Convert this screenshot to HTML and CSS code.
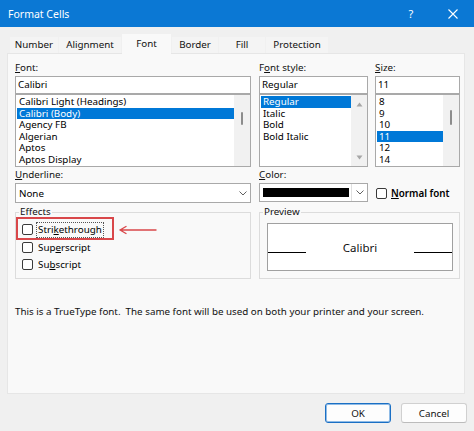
FILE: index.html
```html
<!DOCTYPE html>
<html>
<head>
<meta charset="utf-8">
<link rel="stylesheet" href="styles.css">
</head>
<body>
<div class="dialog">
  <div class="titlebar">
    <span class="title">Format Cells</span>
    <span class="help">?</span>
    <span class="close"><svg width="10" height="10" viewBox="0 0 10 10"><path d="M0.5 0.5L9.5 9.5M9.5 0.5L0.5 9.5" stroke="#fff" stroke-width="1.1" fill="none"/></svg></span>
  </div>
  <div class="tabs">
    <div class="tab t-number">Number</div>
    <div class="tab t-align">Alignment</div>
    <div class="tab t-font active">Font</div>
    <div class="tab t-border">Border</div>
    <div class="tab t-fill">Fill</div>
    <div class="tab t-prot">Protection</div>
  </div>
  <div class="panel">
    <div class="row row1">
      <div class="col c-font">
        <div class="label"><u>F</u>ont:</div>
        <div class="input">Calibri</div>
        <div class="list">
          <div class="items">
            <div class="item">Calibri Light (Headings)</div>
            <div class="item sel">Calibri (Body)</div>
            <div class="item">Agency FB</div>
            <div class="item">Algerian</div>
            <div class="item">Aptos</div>
            <div class="item">Aptos Display</div>
          </div>
          <div class="sb"><div class="thumb th-font"></div></div>
        </div>
      </div>
      <div class="col c-style">
        <div class="label">F<u>o</u>nt style:</div>
        <div class="input">Regular</div>
        <div class="list">
          <div class="items">
            <div class="item sel">Regular</div>
            <div class="item">Italic</div>
            <div class="item">Bold</div>
            <div class="item">Bold Italic</div>
          </div>
          <div class="sb sb-arrows">
            <svg width="7" height="5" viewBox="0 0 7 5"><path d="M3.5 0.5L6.5 4.5H0.5Z" fill="#a6a6a6"/></svg>
            <svg width="7" height="5" viewBox="0 0 7 5"><path d="M3.5 4.5L6.5 0.5H0.5Z" fill="#a6a6a6"/></svg>
          </div>
        </div>
      </div>
      <div class="col c-size">
        <div class="label"><u>S</u>ize:</div>
        <div class="input">11</div>
        <div class="list">
          <div class="items">
            <div class="item">8</div>
            <div class="item">9</div>
            <div class="item">10</div>
            <div class="item sel">11</div>
            <div class="item">12</div>
            <div class="item">14</div>
          </div>
          <div class="sb"><div class="thumb th-size"></div></div>
        </div>
      </div>
    </div>

    <div class="row row2">
      <div class="col c-font">
        <div class="label"><u>U</u>nderline:</div>
        <div class="select">
          <span class="sel-text">None</span>
          <span class="chev"><svg width="8" height="5" viewBox="0 0 8 5"><path d="M0.5 0.5L4 4L7.5 0.5" stroke="#606060" stroke-width="1" fill="none"/></svg></span>
        </div>
      </div>
      <div class="col c-style">
        <div class="label"><u>C</u>olor:</div>
        <div class="select color-select">
          <span class="swatch"></span>
          <span class="chev chev-div"><svg width="8" height="5" viewBox="0 0 8 5"><path d="M0.5 0.5L4 4L7.5 0.5" stroke="#606060" stroke-width="1" fill="none"/></svg></span>
        </div>
      </div>
      <div class="col c-size">
        <div class="label">&nbsp;</div>
        <div class="check-line">
          <span class="cb"></span><span class="cb-text"><u>N</u>ormal font</span>
        </div>
      </div>
    </div>

    <div class="row row3">
      <fieldset class="group g-effects">
        <legend>Effects</legend>
        <div class="check-row first">
          <span class="cb"></span><span class="cb-text focus">Stri<u>k</u>ethrough</span>
          <span class="red-box"></span>
          <svg class="red-arrow" width="38" height="10" viewBox="0 0 38 10"><path d="M1 5H37M1 5L7 1.5M1 5L7 8.5" stroke="#d9474a" stroke-width="1.4" fill="none" stroke-linecap="round"/></svg>
        </div>
        <div class="check-row">
          <span class="cb"></span><span class="cb-text">Sup<u>e</u>rscript</span>
        </div>
        <div class="check-row">
          <span class="cb"></span><span class="cb-text">Su<u>b</u>script</span>
        </div>
      </fieldset>
      <fieldset class="group g-preview">
        <legend>Preview</legend>
        <div class="preview">
          <span class="pline"></span>
          <span class="ptext">Calibri</span>
          <span class="pline"></span>
        </div>
      </fieldset>
    </div>

    <p class="info">This is a TrueType font.&nbsp; The same font will be used on both your printer and your screen.</p>
  </div>
  <div class="buttons">
    <button class="btn ok">OK</button>
    <button class="btn">Cancel</button>
  </div>
</div>
</body>
</html>
```
FILE: styles.css
```css
html, body {
  margin: 0;
  padding: 0;
  background: #f0f0f0;
}
body {
  font-family: "Noto Sans", "Open Sans", sans-serif;
  font-size: 9.8px;
  color: #000;
}
u { text-decoration-thickness: 1px; text-underline-offset: 1px; }

.dialog {
  width: 474px;
  height: 431px;
  background: #f0f0f0;
  display: flex;
  flex-direction: column;
  overflow: hidden;
}

.titlebar {
  height: 27px;
  flex: none;
  background: #0b78d4;
  color: #fff;
  display: flex;
  align-items: center;
  padding-left: 8px;
  font-size: 10.5px;
}
.title { flex: 1; }
.help {
  width: 12px;
  text-align: center;
  font-size: 11px;
  margin-right: 31px;
}
.close {
  width: 10px;
  height: 10px;
  margin-right: 16px;
  display: flex;
}

.tabs {
  height: 26px;
  flex: none;
  display: flex;
  align-items: flex-end;
  padding-left: 10px;
  gap: 1px;
  position: relative;
  z-index: 2;
}
.tab {
  height: 16px;
  line-height: 16px;
  text-align: center;
  background: #f4f4f4;
  color: #111;
}
.tab.active {
  height: 20px;
  line-height: 19px;
  margin-bottom: -1px;
  background: #f9f9f9;
}
.t-number { width: 48px; }
.t-align { width: 62px; }
.t-font { width: 49px; }
.t-border { width: 46px; }
.t-fill { width: 46px; }
.t-prot { width: 62px; }

.panel {
  margin-left: 7px;
  width: 458px;
  height: 341px;
  flex: none;
  box-sizing: border-box;
  border: 1px solid #e6e6e6;
  background: #f9f9f9;
  padding: 7px 0 0 7px;
}

.row { display: flex; }
.c-font { width: 236px; }
.c-style { width: 109px; margin-left: 8px; }
.c-size { width: 85px; margin-left: 7px; }

.label {
  height: 13px;
  line-height: 13px;
  margin-bottom: 2px;
  color: #111;
}
.row2 { margin-top: 2px; }
.row2 .label { height: 12px; line-height: 12px; }

.input {
  height: 18px;
  box-sizing: border-box;
  border: 1px solid #a9a9a9;
  background: #fff;
  padding-left: 2px;
  line-height: 16px;
}
.list {
  height: 73px;
  box-sizing: border-box;
  border: 1px solid #a9a9a9;
  background: #fff;
  display: flex;
  padding: 1px 0 0 1px;
}
.items { flex: 1; overflow: hidden; }
.item {
  height: 11.5px;
  line-height: 11.5px;
  padding-left: 2px;
  white-space: nowrap;
}
.item.sel { background: #0078d7; color: #fff; }
.sb {
  width: 16px;
  margin-top: -1px;
  background: #f1f1f1;
  display: flex;
  flex-direction: column;
  align-items: center;
}
.thumb { width: 2px; background: #8c8c8c; border-radius: 1px; }
.th-font { margin-top: 17px; height: 13px; }
.th-size { margin-top: 15px; height: 15px; }
.sb-arrows {
  justify-content: space-between;
  padding: 7px 0 6px;
  box-sizing: border-box;
}

.select {
  height: 20px;
  box-sizing: border-box;
  border: 1px solid #a9a9a9;
  background: #fff;
  display: flex;
  align-items: center;
}
.sel-text { flex: 1; padding-left: 3px; }
.chev {
  width: 15px;
  height: 100%;
  display: flex;
  align-items: center;
  justify-content: center;
}
.color-select { height: 19px; margin-top: 1px; }
.swatch {
  flex: 1;
  height: 9px;
  margin: 0 2px 0 3px;
  background: #000;
}
.chev-div { border-left: 1px solid #e0e0e0; }

.check-line {
  height: 20px;
  display: flex;
  align-items: center;
  padding-left: 1px;
}
.cb {
  width: 11px;
  height: 11px;
  box-sizing: border-box;
  border: 1px solid #3a3a3a;
  border-radius: 2px;
  background: #fff;
  flex: none;
}
.cb-text { margin-left: 4px; }
.check-line .cb-text { font-weight: 600; margin-left: 4px; }

.row3 { margin-top: 3px; align-items: stretch; }
.group {
  margin: 0;
  padding: 0 0 0 6px;
  border: 1px solid #dcdcdc;
  min-width: 0;
  box-sizing: border-box;
}
.group legend {
  padding: 0 1px;
  margin-left: -3px;
  line-height: 12px;
  color: #111;
}
.g-effects { width: 236px; padding-bottom: 4px; }
.g-preview { width: 201px; margin-left: 8px; padding-bottom: 6px; }

.check-row {
  height: 17.5px;
  display: flex;
  align-items: center;
}
.check-row.first { margin-top: 3px; position: relative; }
.check-row .cb-text { margin-left: 5px; }
.focus {
  margin-left: 3px !important;
  padding: 0 1px;
  line-height: 14px;
  border: 1px dotted #555;
}
.red-box {
  position: absolute;
  left: -6px;
  top: -4px;
  width: 98px;
  height: 23px;
  box-sizing: border-box;
  border: 2px solid #d9474a;
}
.red-arrow {
  position: absolute;
  left: 97px;
  top: 4px;
}

.preview {
  margin: 5px 0 0 1px;
  width: 186px;
  height: 48px;
  box-sizing: border-box;
  border: 1px solid #a0a0a0;
  background: #fff;
  display: flex;
  align-items: center;
}
.pline {
  width: 38px;
  height: 1px;
  background: #000;
  margin-top: 10px;
  flex: none;
}
.ptext {
  flex: 1;
  text-align: center;
  font-size: 11.5px;
  color: #111;
}

.info {
  margin: 27px 0 0 0;
  line-height: 12px;
  color: #111;
}

.buttons {
  display: flex;
  justify-content: flex-end;
  gap: 10px;
  padding-right: 7px;
  margin-top: 9px;
}
.btn {
  width: 66px;
  height: 20px;
  box-sizing: border-box;
  border: 1px solid #d0d0d0;
  border-bottom-color: #bcbcbc;
  border-radius: 3px;
  background: #fdfdfd;
  font-family: "Noto Sans", "Open Sans", sans-serif;
  font-size: 9.8px;
  color: #111;
  padding: 0;
}
.btn.ok {
  border: 1px solid #1a6fc4;
  box-shadow: inset 0 0 0 1px #8fbbe6;
}
```
